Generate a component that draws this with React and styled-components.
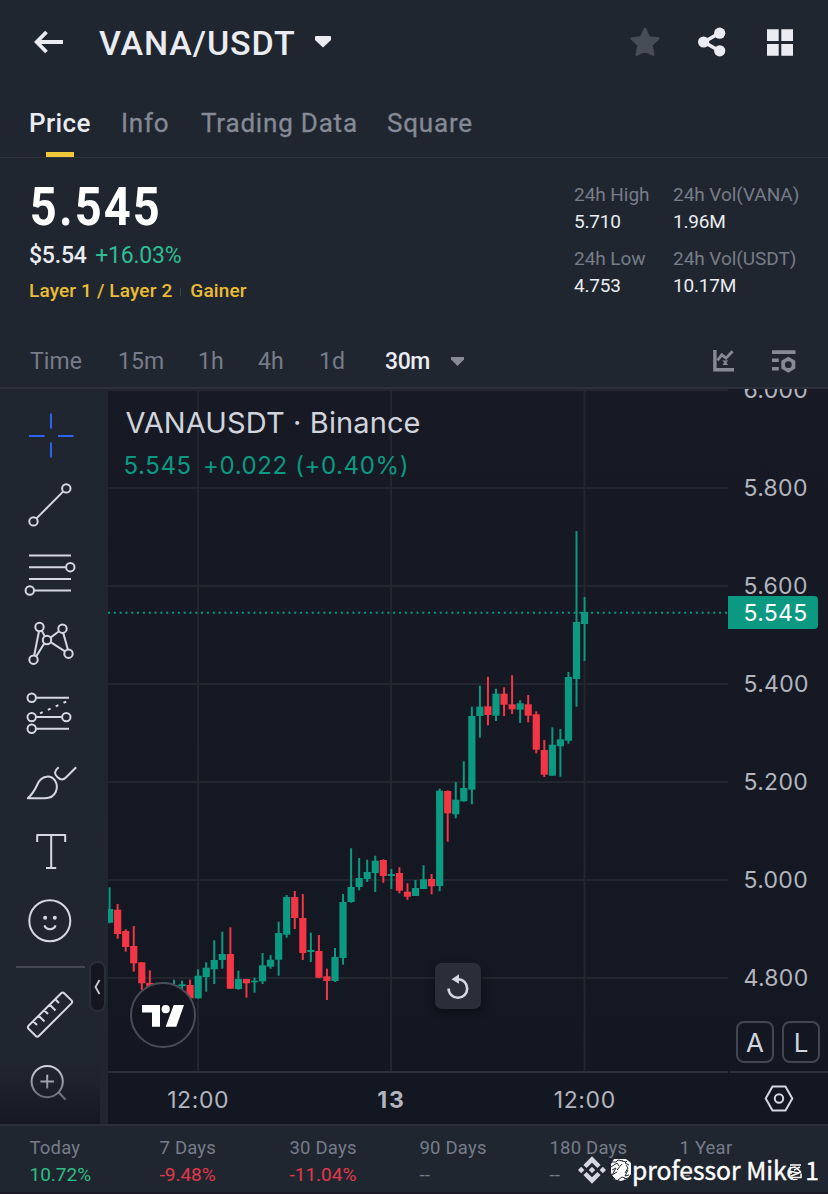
import React from 'react';
import styled, { createGlobalStyle } from 'styled-components';

const UP = '#0b9981';
const DOWN = '#f23645';

// x step between candles and the first candle centre, in plot coordinates
const STEP = 8.05;
const FIRST = 1.6;

// [direction, high, low, body top, body bottom]
const candles = [
  [1, 498.3, 534.3, 520, 533.7],
  [0, 515, 549.7, 520.7, 545],
  [0, 540.3, 562.7, 542, 558],
  [0, 537, 582.7, 557, 574.3],
  [0, 573.3, 601, 573.3, 594.3],
  [0, 581.3, 600, 594, 598],
  [0, 594, 604, 597, 601],
  [1, 593, 604, 597, 601],
  [1, 590.7, 602, 596, 599],
  [1, 591.7, 600, 595.3, 597.3],
  [0, 590.7, 609.3, 596, 609.3],
  [1, 580.3, 609.7, 586.7, 609.3],
  [1, 573.3, 602.7, 578.7, 588],
  [1, 551.3, 595, 571, 580.3],
  [1, 542.7, 579.7, 565, 571],
  [0, 538.3, 599.7, 565, 599.7],
  [1, 581.7, 600.7, 590, 600],
  [0, 590, 608.7, 590, 594.3],
  [1, 588.7, 603.7, 591.7, 593.3],
  [1, 564, 595, 576.3, 592.3],
  [1, 566, 579.7, 570.7, 577.7],
  [1, 532.7, 586.7, 544, 570.7],
  [1, 506, 548.7, 508, 545.7],
  [0, 502, 540, 508, 529],
  [0, 505, 571, 529, 564],
  [1, 543.7, 573, 561, 563],
  [0, 546, 589, 562, 588.7],
  [0, 579.7, 611, 587.3, 592],
  [1, 559, 593, 568, 592],
  [1, 505, 575.7, 513, 569],
  [1, 459.3, 513.7, 498, 513],
  [1, 469, 501.3, 489, 498],
  [1, 470.7, 493, 483, 490],
  [1, 466.7, 503, 471.7, 484],
  [0, 470.3, 493.7, 471, 487],
  [1, 480, 500, 485, 487],
  [0, 478.3, 504.3, 484, 501.7],
  [0, 494.3, 510.7, 502.7, 507.7],
  [1, 491, 507, 499, 507],
  [1, 476.3, 500, 490.3, 500],
  [0, 485, 505.3, 490, 497.3],
  [1, 399.7, 502.3, 401.7, 497],
  [0, 401.3, 452.7, 402, 424.3],
  [1, 393, 429.3, 410.7, 425.3],
  [1, 372.3, 412.7, 399, 412.3],
  [1, 317.7, 415.3, 327, 400.7],
  [1, 296.7, 348.7, 317.7, 327],
  [0, 287.7, 336.3, 317.3, 326],
  [1, 299.7, 332, 304.7, 326.7],
  [0, 298.3, 327, 304.7, 315.7],
  [0, 286.3, 325, 315.3, 320.3],
  [1, 311.3, 334, 314.3, 320.7],
  [0, 306, 333.3, 315.3, 326.7],
  [0, 322.3, 364.3, 325.3, 360.7],
  [0, 351, 388, 361, 385.7],
  [1, 338.3, 386.7, 355.7, 386.7],
  [1, 340, 387.7, 350.3, 357.3],
  [1, 283, 354.7, 288, 351.7],
  [1, 142, 317.7, 233, 290],
  [1, 208, 272, 223, 235],
];

const tabs = ['Price', 'Info', 'Trading Data', 'Square'];

const stats = [
  ['24h High', '5.710'],
  ['24h Vol(VANA)', '1.96M'],
  ['24h Low', '4.753'],
  ['24h Vol(USDT)', '10.17M'],
];

const intervals = ['Time', '15m', '1h', '4h', '1d'];
const prices = ['6.000', '5.800', '5.600', '5.400', '5.200', '5.000', '4.800'];

const performance = [
  ['Today', '10.72%', '#2ebd85'],
  ['7 Days', '-9.48%', '#e2384d'],
  ['30 Days', '-11.04%', '#e2384d'],
  ['90 Days', '--'],
  ['180 Days', '--'],
  ['1 Year', '--'],
];

const ToolSvg = ({ children }) => (
  <svg width="60" height="69.2" viewBox="0 0 60 69.2" fill="none" stroke="#d5d8e2" strokeWidth="2">
    {children}
  </svg>
);

const drawingTools = [
  <path key="cross" stroke="#2f62ee" d="M31 12.6v15M31 41.6v15M9 35h15.5M38 35h15.5" />,
  <g key="trend">
    <circle cx="13.5" cy="50.4" r="4.2" />
    <circle cx="46.3" cy="17.4" r="4.2" />
    <path d="M16.5 47.4 43.3 20.4" />
  </g>,
  <g key="fib">
    <path d="M9 15.5h42M9 27.2h37M9 38.9h42M14 50.5h37" />
    <circle cx="50.3" cy="27.2" r="4.2" />
    <circle cx="9.8" cy="50.5" r="4.2" />
  </g>,
  <g key="pattern">
    <circle cx="19.5" cy="18" r="4.2" />
    <circle cx="42.5" cy="19.7" r="4.2" />
    <circle cx="27" cy="31" r="4.2" />
    <circle cx="48.5" cy="44.7" r="4.2" />
    <circle cx="13.5" cy="50.7" r="4.2" />
    <path d="M19 22.2 14.2 46.5M21.8 21.6 24.8 27.4M24.4 34.3 16.2 47.4M30.5 28.6 39 22.2M30.6 33.2 45 42.4M43.2 23.9 47.9 40.5" />
  </g>,
  <g key="forecast">
    <circle cx="11.7" cy="19.8" r="4.2" />
    <circle cx="11.7" cy="39.1" r="4.2" />
    <circle cx="46.3" cy="39.1" r="4.2" />
    <circle cx="11.7" cy="50.8" r="4.2" />
    <path d="M16 19.8h33M16 39.1h26M16 50.8h33" />
    <path strokeDasharray="3 5.6" d="M20 35.4 47 23.2" />
  </g>,
  <g key="brush" strokeLinejoin="round">
    <path d="M7.8 51.2C14 46 16 40 18.6 35c4-6.6 12.3-7.2 16.4-1.4C39.2 40.5 36 51.2 25 51.2Z" />
    <path d="M38.7 20.2C34 23.8 34 27 37.6 30.3c3 3 6 2.6 8.6 0L56.2 20.2" />
  </g>,
  <path key="text" strokeLinejoin="round" d="M17.2 25v-7h28v7M31.2 18v33M26 51h10.2" />,
  <g key="smile">
    <circle cx="29.8" cy="34.7" r="20.5" />
    <circle cx="25.1" cy="31.8" r="2" fill="#d5d8e2" stroke="none" />
    <circle cx="34.8" cy="31.8" r="2" fill="#d5d8e2" stroke="none" />
    <path d="M24.4 39.4c1.6 5 9.6 5 11.2 0" />
  </g>,
];

const ArrowLeft = () => (
  <svg width="30" height="24" viewBox="0 0 30 24" fill="none" stroke="#eaecf2" strokeWidth="3.8">
    <path d="M29 12H3M12.5 2 2.7 12l9.8 10" />
  </svg>
);

const Star = () => (
  <svg width="30" height="30" viewBox="0 0 30 30" fill="#474d57" stroke="#474d57" strokeWidth="2.6" strokeLinejoin="round">
    <path d="m15 2 3.9 8.5 9.3 1.1-6.8 6.4 1.8 9.7L15 23.6l-8.2 4.1 1.8-9.7-6.8-6.4 9.3-1.1Z" />
  </svg>
);

const Share = () => (
  <svg width="30" height="30" viewBox="0 0 30 30" fill="#eaecf2">
    <path d="M22.5 6 7 15l15.5 9" fill="none" stroke="#eaecf2" strokeWidth="3.6" />
    <circle cx="22.7" cy="6.2" r="5.6" />
    <circle cx="22.7" cy="23.8" r="5.6" />
    <circle cx="6.6" cy="15" r="5.6" />
  </svg>
);

const Tiles = () => (
  <svg width="26" height="27" viewBox="0 0 26 27" fill="#eaecf2">
    <path d="M0 .3h11.7v11.8H0zM14.3.3H26v11.8H14.3zM0 14.9h11.7v11.8H0zM14.3 14.9H26v11.8H14.3z" />
  </svg>
);

const ChartStyleIcon = () => (
  <svg width="21" height="22" viewBox="0 0 21 22" fill="none" stroke="#858a96">
    <path strokeWidth="3.4" d="M1.9 0v19.7H21" />
    <path strokeWidth="2.8" d="M4.5 10.3 8.8 4.8l4.2 3.4 6.600-7" />
    <path fill="#858a96" stroke="none" d="M9.3 10.5h6l-2 2.3 2 2.2h-6l2-2.2z" />
  </svg>
);

const IndicatorIcon = () => (
  <svg width="24" height="23" viewBox="0 0 24 23" fill="#858a96">
    <path d="M0 .3h23.5v3.6H0zM0 8.5h6.8v3.6H0zM0 17h6.8v3.6H0z" />
    <path fillRule="evenodd" d="m16.3 6.7 7 4v7.8l-7 4.2-7-4.2v-7.800zM16.3 11.3a3.4 3.4 0 1 0 0 6.8 3.4 3.4 0 0 0 0-6.8z" />
  </svg>
);

const Candles = () => (
  <svg width="620" height="682" viewBox="0 0 620 682">
    <path
      stroke="#23262f"
      strokeWidth="2"
      d="M0 1h620M0 99h620M0 197h620M0 295h620M0 393h620M0 491h620M0 589h620M90 0v682M283 0v682M476.500 0v682"
    />
    {candles.map(([up, high, low, top, bottom], i) => {
      const x = FIRST + i * STEP;
      return (
        <g key={i} fill={up ? UP : DOWN}>
          <rect x={x - 1} y={high} width="2" height={low - high} />
          <rect x={x - 3.6} y={top} width="7.2" height={bottom - top} />
        </g>
      );
    })}
    <path d="M0 223.7h620" stroke={UP} strokeWidth="2" strokeDasharray="2 3.82" />
  </svg>
);

const App = () => {
  return (
    <>
      <GlobalStyle />
      <Screen>
        {/* Pair header */}
        <Header>
          <ArrowLeft />
          <Pair>VANA/USDT</Pair>
          <svg width="16" height="12" viewBox="0 0 16 12" fill="#eaecf2">
            <path d="M1 0h14q1 0 1 1v3L8 11.6 0 4V1q0-1 1-1z" />
          </svg>
          <HeaderActions>
            <Star />
            <Share />
            <Tiles />
          </HeaderActions>
        </Header>

        <Tabs>
          {tabs.map((tab, i) => (
            <Tab key={tab} $active={i === 0}>{tab}</Tab>
          ))}
        </Tabs>

        {/* Last price and 24h stats */}
        <Summary>
          <div>
            <LastPrice>5.545</LastPrice>
            <Fiat>$5.54 <span>+16.03%</span></Fiat>
            <Tags>
              <span>Layer 1 / Layer 2</span>
              <i />
              <span>Gainer</span>
            </Tags>
          </div>
          <Stats>
            {stats.map(([label, value]) => (
              <div key={label}>
                <StatLabel>{label}</StatLabel>
                <StatValue>{value}</StatValue>
              </div>
            ))}
          </Stats>
        </Summary>

        <Intervals>
          {intervals.map((item) => (
            <Interval key={item}>{item}</Interval>
          ))}
          <Interval $active>30m</Interval>
          <svg width="13" height="9" viewBox="0 0 13 9" fill="#858a96">
            <path d="M0 0h13v2.5L6.5 9 0 2.5z" />
          </svg>
          <IntervalActions>
            <ChartStyleIcon />
            <IndicatorIcon />
          </IntervalActions>
        </Intervals>

        {/* Chart */}
        <ChartArea>
          <Toolbar>
            {drawingTools.map((tool) => (
              <ToolSvg key={tool.key}>{tool}</ToolSvg>
            ))}
            <Divider />
            <ToolSvg>
              <path
                strokeLinejoin="round"
                d="M41.2 13.2q1.5-1.5 3 0l7.3 7.2q1.3 1.5 0 3L18.8 56q-1.5 1.5-3 0l-7.3-7.2q-1.3-1.5 0-3ZM13.5 41.5l3.5 3.5M19 36l5.5 5.5M24.5 30.5l3.5 3.5M30 25l5.5 5.5M35.5 19.5l3.500 3.500"
              />
            </ToolSvg>
            <ToolSvg>
              <circle cx="27.2" cy="32.6" r="15.6" />
              <path d="M27.2 25.8v13.6M20.4 32.6h13.6M38.6 43.3l7 7.500" />
            </ToolSvg>
            <ToolbarFade />
            <Collapse>
              <svg width="7" height="16" viewBox="0 0 7 16" fill="none" stroke="#c9ccd6" strokeWidth="1.8">
                <path d="M5.5 1 1.5 8l4 7" />
              </svg>
            </Collapse>
          </Toolbar>

          <Plot>
            <Candles />
            <Legend>
              <LegendTitle>VANAUSDT · Binance</LegendTitle>
              <LegendChange>5.545 <span>+0.022 (+0.40%)</span></LegendChange>
            </Legend>
            <TradingViewBadge>
              <svg width="42" height="22" viewBox="0 0 42 22" fill="#fff">
                <path d="M0 0h18v21.7h-8V7.4H0zM31.7 0H42l-7.7 21.7H23.7z" />
                <circle cx="23.7" cy="4.2" r="4.1" />
              </svg>
            </TradingViewBadge>
            <ResetButton>
              <svg width="22" height="26" viewBox="0 0 22 26" fill="none" stroke="#d5d8e2" strokeWidth="2.6">
                <path d="M1.6 14.5a9.3 9.3 0 1 0 9.3-9.3" />
                <path d="M4.5 5.2 12 .3v9.4z" fill="#d5d8e2" stroke="none" />
              </svg>
            </ResetButton>
          </Plot>

          <PriceAxis>
            {prices.map((price) => (
              <Price key={price}>{price}</Price>
            ))}
            <CurrentPrice>5.545</CurrentPrice>
            <ScaleButtons>
              <ScaleButton>A</ScaleButton>
              <ScaleButton>L</ScaleButton>
            </ScaleButtons>
          </PriceAxis>

          <TimeAxis>
            <Time>12:00</Time>
            <Time $strong>13</Time>
            <Time>12:00</Time>
          </TimeAxis>
          <AxisSettings>
            <svg width="30" height="27" viewBox="0 0 30 27" fill="none" stroke="#d5d8e2" strokeWidth="2">
              <path d="M8.5 1.5h13L28.3 13.5l-6.8 12h-13L1.7 13.5z" />
              <circle cx="15" cy="13.5" r="4.2" />
            </svg>
          </AxisSettings>
        </ChartArea>

        {/* Performance by period */}
        <Performance>
          {performance.map(([label, value, color]) => (
            <Period key={label}>
              <PeriodLabel>{label}</PeriodLabel>
              <PeriodValue $color={color}>{value}</PeriodValue>
            </Period>
          ))}
          <Author>
            <svg width="28" height="28" viewBox="0 0 28 28" fill="#d5d8e2">
              <path d="m14 .3 8.6 8.6-3.2 3.2L14 6.7l-5.4 5.4-3.2-3.2zM14 27.7l8.6-8.6-3.2-3.2-5.4 5.4-5.4-5.4-3.2 3.2zM14 10.8l3.2 3.2-3.2 3.2-3.2-3.2zM3.2 10.8 6.4 14l-3.2 3.2L0 14zM24.8 10.8 28 14l-3.2 3.2-3.2-3.2z" />
            </svg>
            <svg width="22" height="24" viewBox="0 0 22 24" fill="none">
              <path fill="#fff" d="M4 1h12l5 4v11l-4 5-6 2-7-2-3-6V6z" />
              <path stroke="#202630" strokeWidth="1" d="M0 4h6l2-2 5 1M17 3l-2 2 4 2M1 9l6-4 2 3M2 12l4-2-4 7 5-3M7 12l5-6M16 7l2 3-3 5M2 18l3 3M18 12l-3 6 4-1M8 22l4-3 3 1M12 3l4 1M18 20l-4 1" />
            </svg>
            <AuthorName>
              professor Mik<Squashed>
                e
                <svg width="13" height="17" viewBox="0 0 13 17" fill="none">
                  <path fill="#202630" d="M1 0h12v17H4z" />
                  <path stroke="#fff" strokeWidth="1.5" d="M1 3h11M1 6l5-1 6 5M0 9l9 2 3-1M2 14l8-3M3 15.5h9v-4M5 8l6-3" />
                </svg>
              </Squashed> 1
            </AuthorName>
          </Author>
        </Performance>
      </Screen>
    </>
  );
};

const GlobalStyle = createGlobalStyle`
  * {
    box-sizing: border-box;
  }

  body {
    margin: 0;
    background: #202630;
  }

  svg {
    display: block;
    flex-shrink: 0;
  }
`;

const Screen = styled.div`
  width: 828px;
  height: 1194px;
  display: flex;
  flex-direction: column;
  overflow: hidden;
  background: #202630;
  color: #eaecf2;
  font-family: Roboto, sans-serif;
  white-space: nowrap;
`;

const Header = styled.header`
  height: 88px;
  padding: 0 35px 4px 34px;
  display: flex;
  align-items: center;
`;

const Pair = styled.h1`
  width: 216px;
  margin: 1px 0 0 35px;
  font-size: 34px;
  font-weight: 500;
  letter-spacing: 0.9px;
`;

const HeaderActions = styled.div`
  margin-left: auto;
  display: flex;
  align-items: center;
  gap: 37px;

  svg:last-child {
    margin-left: 3px;
  }
`;

const Tabs = styled.nav`
  height: 70px;
  padding-left: 29px;
  display: grid;
  grid-template-columns: 92px 80px 186px 100px;
  border-bottom: 1px solid #2f3540;
`;

const Tab = styled.div`
  height: 69px;
  position: relative;
  line-height: 70px;
  font-size: 26px;
  font-weight: ${(props) => (props.$active ? 500 : 400)};
  -webkit-text-stroke: ${(props) => (props.$active ? 0 : '0.3px')};
  letter-spacing: ${(props) => (props.$active ? '0.4px' : '0.8px')};
  color: ${(props) => (props.$active ? '#eaecf2' : '#858a96')};

  &::after {
    content: '';
    display: ${(props) => (props.$active ? 'block' : 'none')};
    position: absolute;
    left: 17px;
    bottom: 0;
    width: 28px;
    height: 5px;
    background: #f0c93b;
  }
`;

const Summary = styled.section`
  height: 177px;
  padding: 18px 24px 0 29px;
  display: flex;
  justify-content: space-between;
`;

const LastPrice = styled.div`
  height: 62px;
  padding-left: 1px;
  line-height: 61px;
  font-size: 54px;
  font-weight: 700;
  letter-spacing: 2.4px;
  color: #fff;
  /* tall narrow digits */
  transform: scaleX(0.87);
  transform-origin: left;
`;

const Fiat = styled.div`
  height: 36px;
  line-height: 35px;
  font-size: 23px;
  font-weight: 500;
  letter-spacing: -0.2px;

  span {
    margin-left: 3px;
    font-weight: 400;
    color: #2ebd93;
  }
`;

const Tags = styled.div`
  height: 32px;
  display: flex;
  align-items: center;
  font-size: 19px;
  font-weight: 500;
  letter-spacing: 0.15px;
  color: #eabc35;

  i {
    width: 1px;
    height: 8px;
    margin: 4px 9px 0 8px;
    background: #3c424d;
  }
`;

const Stats = styled.div`
  display: grid;
  grid-template-columns: 99px 131px;
  grid-auto-rows: 63.5px;
  padding-top: 5px;
`;

const StatLabel = styled.div`
  height: 27px;
  line-height: 27px;
  font-size: 19px;
  letter-spacing: -0.05px;
  color: #777c89;
`;

const StatValue = styled.div`
  height: 27px;
  line-height: 28px;
  font-size: 19px;
  letter-spacing: -0.2px;
`;

const Intervals = styled.div`
  height: 54px;
  padding: 0 32px 0 30px;
  display: grid;
  grid-template-columns: 88px 80px 60px 61px 66px 66px 13px 1fr;
  align-items: center;
  border-bottom: 2px solid #2b303b;
`;

const Interval = styled.div`
  padding-top: 1px;
  font-size: 23px;
  font-weight: ${(props) => (props.$active ? 500 : 400)};
  letter-spacing: ${(props) => (props.$active ? '-0.4px' : '0.1px')};
  color: ${(props) => (props.$active ? '#eaecf2' : '#777c89')};
`;

const IntervalActions = styled.div`
  display: flex;
  justify-content: flex-end;
  gap: 38px;
`;

const ChartArea = styled.main`
  height: 735px;
  display: grid;
  grid-template-columns: 108px 620px 100px;
  grid-template-rows: 682px 53px;
  background: linear-gradient(#171a25, #131722);
  font-family: Inter, sans-serif;
`;

const Toolbar = styled.aside`
  grid-row: 1 / 3;
  position: relative;
  padding: 12.4px 0 0 20.3px;
  background: #202630;
`;

const Divider = styled.div`
  width: 69px;
  height: 2px;
  margin: 11px 0 12px -4px;
  background: #434852;
`;

const ToolbarFade = styled.div`
  position: absolute;
  left: 0;
  bottom: 0;
  width: 100px;
  height: 60px;
  background: linear-gradient(rgba(21, 24, 35, 0), #151823);
`;

const Collapse = styled.button`
  position: absolute;
  left: 89px;
  top: 572px;
  width: 17px;
  height: 51px;
  padding: 0 1px 0 0;
  display: grid;
  place-items: center;
  background: #141720;
  border: 2px solid #292e38;
  border-radius: 8px;
`;

const Plot = styled.div`
  position: relative;
`;

const Legend = styled.div`
  position: absolute;
  left: 17.5px;
  top: 14px;
`;

const LegendTitle = styled.div`
  line-height: 40px;
  font-size: 29px;
  letter-spacing: 0.12px;
  color: #d1d4dc;
`;

const LegendChange = styled.div`
  margin: 3px 0 0 -2px;
  line-height: 40px;
  font-size: 24px;
  letter-spacing: 0.6px;
  color: ${UP};

  span {
    margin-left: 4px;
  }
`;

const TradingViewBadge = styled.div`
  position: absolute;
  left: 22px;
  top: 593px;
  width: 66px;
  height: 66px;
  padding: 2px 1px 0 0;
  display: grid;
  place-items: center;
  background: #141721;
  border: 2px solid #4a4d57;
  border-radius: 50%;
`;

const ResetButton = styled.button`
  position: absolute;
  left: 327px;
  top: 574px;
  width: 46px;
  height: 46px;
  padding: 1px 0 0 0;
  display: grid;
  place-items: center;
  background: #2a2e38;
  border: 0;
  border-radius: 7px;
  box-shadow: 0 4px 8px rgba(0, 0, 0, 0.4);
`;

const PriceAxis = styled.div`
  height: 682px;
  position: relative;
  overflow: hidden;
`;

const Price = styled.div`
  height: 98px;
  padding-left: 15.5px;
  line-height: 98px;
  font-size: 23px;
  letter-spacing: 0.3px;
  color: #b2b5be;

  &:first-child {
    margin-top: -48px;
  }
`;

const CurrentPrice = styled.div`
  position: absolute;
  left: 0;
  top: 207px;
  width: 90px;
  height: 33px;
  padding-left: 15.5px;
  line-height: 34px;
  font-size: 23px;
  letter-spacing: 0.3px;
  color: #fff;
  background: ${UP};
  border-radius: 0 4px 4px 0;
`;

const ScaleButtons = styled.div`
  position: absolute;
  left: 8px;
  top: 632px;
  display: flex;
  gap: 8px;
`;

const ScaleButton = styled.button`
  width: 38px;
  height: 42px;
  padding: 0;
  font-family: Inter, sans-serif;
  font-size: 26px;
  color: #d1d4dc;
  background: transparent;
  border: 2px solid #434651;
  border-radius: 8px;
`;

const TimeAxis = styled.div`
  display: grid;
  grid-template-columns: repeat(3, 193.3px);
  justify-content: start;
  border-top: 2px solid #2d303a;
  text-indent: -13px;
`;

const Time = styled.div`
  text-align: center;
  line-height: 54px;
  font-size: 23px;
  font-weight: ${(props) => (props.$strong ? 700 : 400)};
  letter-spacing: ${(props) => (props.$strong ? '1.8px' : '0.6px')};
  color: #b2b5be;
`;

const AxisSettings = styled.div`
  margin-left: 2px;
  display: grid;
  place-items: center;
  border-top: 2px solid #2d303a;
`;

const Performance = styled.footer`
  height: 70px;
  position: relative;
  padding: 8px 0 0 29.5px;
  display: grid;
  grid-template-columns: repeat(6, 130px);
  border-top: 2px solid #2b303b;
  border-bottom: 2px solid #1b1a26;
`;

const Period = styled.div``;

const PeriodLabel = styled.div`
  line-height: 28px;
  font-size: 18.5px;
  letter-spacing: 0.2px;
  color: #777c89;
`;

const PeriodValue = styled.div`
  line-height: 26px;
  font-size: 19px;
  color: ${(props) => props.$color || '#777c89'};
`;

const Author = styled.div`
  position: absolute;
  left: 578px;
  top: 26px;
  height: 36px;
  display: flex;
  align-items: center;
  gap: 4px;
`;

const AuthorName = styled.div`
  margin: -2px 0 0 -4px;
  font-family: 'Noto Sans CJK SC', sans-serif;
  font-size: 24.7px;
  font-weight: 400;
  -webkit-text-stroke: 0.4px #fff;
  line-height: 36px;
  color: #fff;
`;

const Squashed = styled.span`
  position: relative;

  svg {
    position: absolute;
    left: 3px;
    top: 11px;
  }
`;

export default App;
